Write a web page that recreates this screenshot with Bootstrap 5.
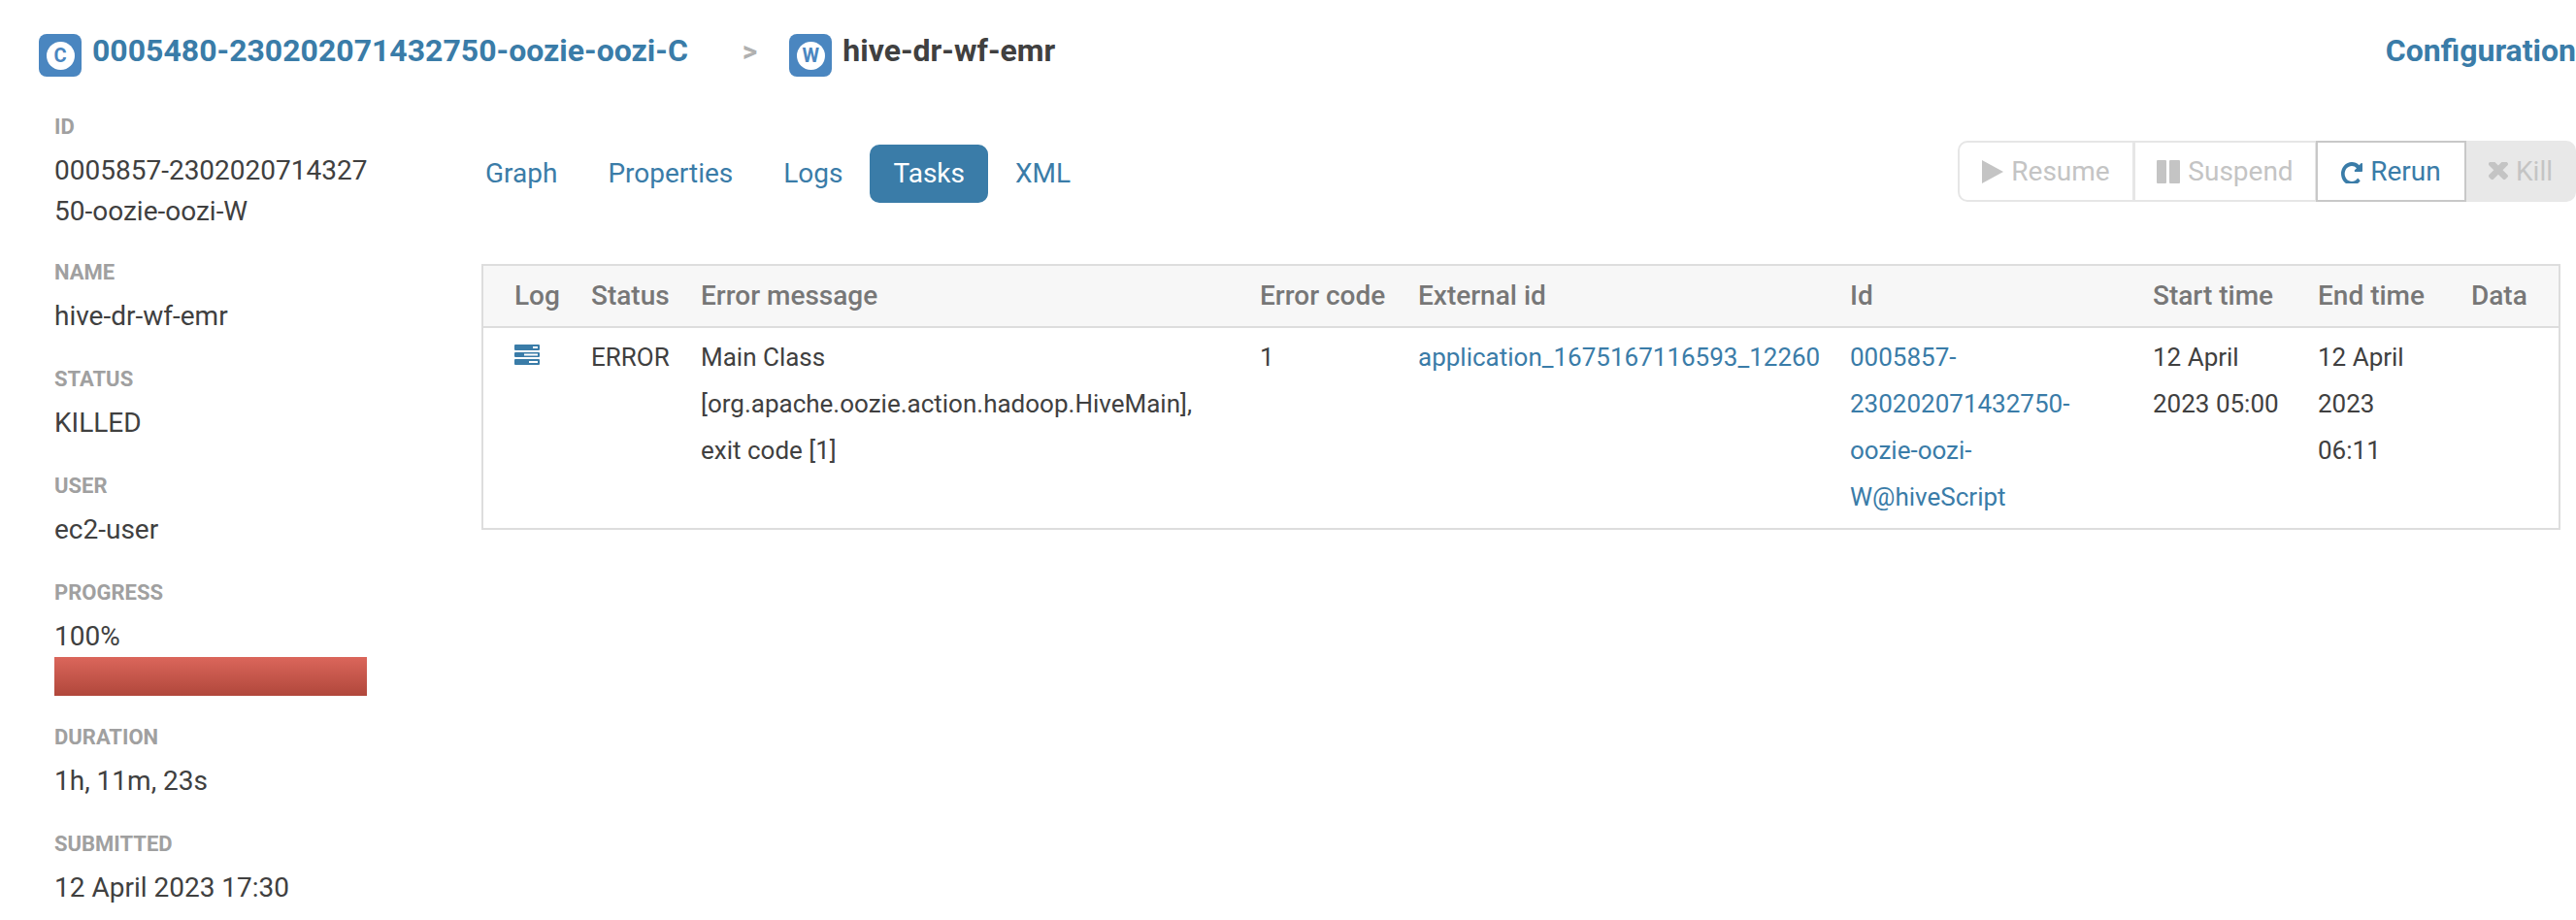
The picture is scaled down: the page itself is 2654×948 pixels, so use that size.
<!DOCTYPE html>
<html lang="en">
<head>
<meta charset="utf-8">
<title>hive-dr-wf-emr</title>
<link href="https://cdn.jsdelivr.net/npm/bootstrap@5.3.0/dist/css/bootstrap.min.css" rel="stylesheet">
<style>
html,body{height:948px;overflow:hidden}
body{font-family:Roboto,"Liberation Sans",sans-serif;font-size:28px;color:#404040;background:#fff}
a{color:#3a7ca8;text-decoration:none}
.head-bar{height:116px;padding:0 0 0 40px}
.wf-ico{width:44px;height:44px;background:#4a86c0;border-radius:8px;margin-top:35px;flex:none}
.wf-ico span{width:29px;height:29px;border-radius:50%;background:#fff;color:#4a86c0;font-size:20px;font-weight:700;line-height:1}
.crumb{font-size:32px;font-weight:700;line-height:40px;margin-top:32px;white-space:nowrap}
.crumb-a{margin-left:11px}
.crumb-sep{color:#b0b0b0;font-size:30px;font-weight:700;margin:33px 33px 0 56px;line-height:40px}
.crumb-b{margin-left:11px;color:#404040}
.side-col{width:322px;margin-left:56px;flex:none}
.sec-label{font-size:22px;font-weight:700;line-height:30px;color:#a0a0a0;text-transform:uppercase;margin-bottom:9px}
.sec-val{line-height:42px;word-break:break-all;margin-bottom:29px;margin-right:-4px}
.sec-val-wrap{margin-bottom:27px}
.sec-val-tight{margin-bottom:0}
.bar-track{height:40px;border-radius:0;margin-bottom:28px;background:#b5463a}
.bar-fill{width:100%;background:linear-gradient(#db665b,#b0473b)}
.main-col{margin-left:98px;margin-top:29px;min-width:0}
.tab-row .nav-link{font-size:28px;line-height:36px;padding:12px 24px;color:#3a7ca8;border-radius:10px}
.tab-row .nav-link.active{background:#3a7ca8;color:#fff}
.tab-row .nav-item+.nav-item{margin-left:4px}
.act-group .btn{font-size:28px;line-height:36px;height:63px;padding:0;border:2px solid #e6e6e6;color:#c4c4c4;background:#fff;opacity:1;border-radius:0;display:flex;align-items:center;justify-content:center;gap:8px}
.act-group .btn svg{fill:currentColor;flex:none}
.act-group .act-1{width:182px;border-radius:10px 0 0 10px}
.act-group .act-2{width:189px}
.act-group .act-3{width:155px;border-color:#c8c8c8;color:#3a7ca8;z-index:1}
.act-group .act-4{width:114px;background:#e8e8e8;border-color:#e8e8e8;border-radius:0 10px 10px 0}
.task-wrap{margin:63px 16px 0 20px;border:2px solid #ddd}
.task-table{table-layout:fixed;width:100%;margin:0;--bs-table-color:#404040;--bs-table-bg:transparent}
.task-table th,.task-table td{border:0;padding:0 34px 0 0;font-size:26px;line-height:48px}
.task-table th{background:#f7f7f7;color:#777;font-size:28px;font-weight:500;height:63px;line-height:36px;border-bottom:2px solid #ddd;vertical-align:middle;white-space:nowrap}
.task-table td{padding-top:6px;padding-bottom:8px;vertical-align:top}
.task-table .cell-first{padding-left:32px}
.task-table .cell-nw{white-space:nowrap}
.log-ico{display:block;margin-top:11px;fill:#3a7ca8}
</style>
</head>
<body>
<div class="head-bar d-flex align-items-start">
  <span class="wf-ico d-flex align-items-center justify-content-center"><span class="d-flex align-items-center justify-content-center">C</span></span>
  <a class="crumb crumb-a" href="#">0005480-230202071432750-oozie-oozi-C</a>
  <span class="crumb-sep">&gt;</span>
  <span class="wf-ico d-flex align-items-center justify-content-center"><span class="d-flex align-items-center justify-content-center">W</span></span>
  <span class="crumb crumb-b">hive-dr-wf-emr</span>
  <a class="crumb ms-auto" href="#">Configuration</a>
</div>
<div class="d-flex">
  <div class="side-col">
    <div class="sec-label">ID</div>
    <div class="sec-val sec-val-wrap">0005857-230202071432750-oozie-oozi-W</div>
    <div class="sec-label">Name</div>
    <div class="sec-val">hive-dr-wf-emr</div>
    <div class="sec-label">Status</div>
    <div class="sec-val">KILLED</div>
    <div class="sec-label">User</div>
    <div class="sec-val">ec2-user</div>
    <div class="sec-label">Progress</div>
    <div class="sec-val sec-val-tight">100%</div>
    <div class="progress bar-track"><div class="progress-bar bar-fill" role="progressbar"></div></div>
    <div class="sec-label">Duration</div>
    <div class="sec-val">1h, 11m, 23s</div>
    <div class="sec-label">Submitted</div>
    <div class="sec-val">12 April 2023 17:30</div>
  </div>
  <div class="main-col flex-grow-1">
    <div class="d-flex align-items-start justify-content-between">
      <ul class="nav nav-pills tab-row mt-1">
        <li class="nav-item"><a class="nav-link" href="#">Graph</a></li>
        <li class="nav-item"><a class="nav-link" href="#">Properties</a></li>
        <li class="nav-item"><a class="nav-link" href="#">Logs</a></li>
        <li class="nav-item"><a class="nav-link active" href="#">Tasks</a></li>
        <li class="nav-item"><a class="nav-link" href="#">XML</a></li>
      </ul>
      <div class="btn-group act-group">
        <button class="btn act-1" disabled><svg width="22" height="24" viewBox="0 0 22 24"><path d="M0 0L22 12L0 24Z"/></svg>Resume</button>
        <button class="btn act-2" disabled><svg width="24" height="24" viewBox="0 0 24 24"><rect width="10" height="24" rx="1"/><rect x="13" width="11" height="24" rx="1"/></svg>Suspend</button>
        <button class="btn act-3"><svg width="22" height="24" viewBox="0 0 1536 1536" preserveAspectRatio="none"><path d="M1536 256v448q0 26-19 45t-45 19h-448q-42 0-59-40-17-39 14-69l138-138q-148-137-349-137-104 0-198.500 40.500t-163.500 109.500-109.500 163.500-40.500 198.500 40.500 198.500 109.500 163.500 163.500 109.500 198.500 40.500q119 0 225-52t179-147q7-10 23-12 15 0 25 9l137 138q9 8 9.500 20.500t-7.500 22.500q-109 132-264 204.500t-327 72.500q-156 0-298-61t-245-164-164-245-61-298 61-298 164-245 245-164 298-61q147 0 284.500 55.500t244.500 156.500l130-129q29-31 70-14 39 17 39 59z"/></svg>Rerun</button>
        <button class="btn act-4" disabled><svg width="20" height="20" viewBox="122 256 1176 1176" ><path d="M1298 1098q0 40-28 68l-136 136q-28 28-68 28t-68-28l-294-294-294 294q-28 28-68 28t-68-28l-136-136q-28-28-28-68t28-68l294-294-294-294q-28-28-28-68t28-68l136-136q28-28 68-28t68 28l294 294 294-294q28-28 68-28t68 28l136 136q28 28 28 68t-28 68l-294 294 294 294q28 28 28 68z"/></svg>Kill</button>
      </div>
    </div>
    <div class="task-wrap">
      <table class="table task-table">
        <colgroup><col style="width:111px"><col style="width:113px"><col style="width:576px"><col style="width:163px"><col style="width:445px"><col style="width:312px"><col style="width:170px"><col style="width:158px"><col></colgroup>
        <thead><tr><th class="cell-first">Log</th><th>Status</th><th>Error message</th><th>Error code</th><th>External id</th><th>Id</th><th>Start time</th><th>End time</th><th>Data</th></tr></thead>
        <tbody><tr>
          <td class="cell-first"><svg class="log-ico" width="26" height="21" viewBox="0 0 26 21"><path fill-rule="evenodd" d="M1 0h24a1 1 0 0 1 1 1v4a1 1 0 0 1-1 1H1a1 1 0 0 1-1-1V1a1 1 0 0 1 1-1zM19 2v2h5V2zM1 8h24a1 1 0 0 1 1 1v3a1 1 0 0 1-1 1H1a1 1 0 0 1-1-1V9a1 1 0 0 1 1-1zM10 9.500v2h14v-2zM1 15h24a1 1 0 0 1 1 1v4a1 1 0 0 1-1 1H1a1 1 0 0 1-1-1v-4a1 1 0 0 1 1-1zM15 17v2h9v-2z"/></svg></td>
          <td>ERROR</td>
          <td>Main Class [org.apache.oozie.action.hadoop.HiveMain], exit code [1]</td>
          <td>1</td>
          <td class="cell-nw"><a href="#">application_1675167116593_12260</a></td>
          <td><a href="#">0005857-230202071432750-oozie-oozi-W@hiveScript</a></td>
          <td>12 April 2023 05:00</td>
          <td>12 April 2023 06:11</td>
          <td></td>
        </tr></tbody>
      </table>
    </div>
  </div>
</div>
</body>
</html>
